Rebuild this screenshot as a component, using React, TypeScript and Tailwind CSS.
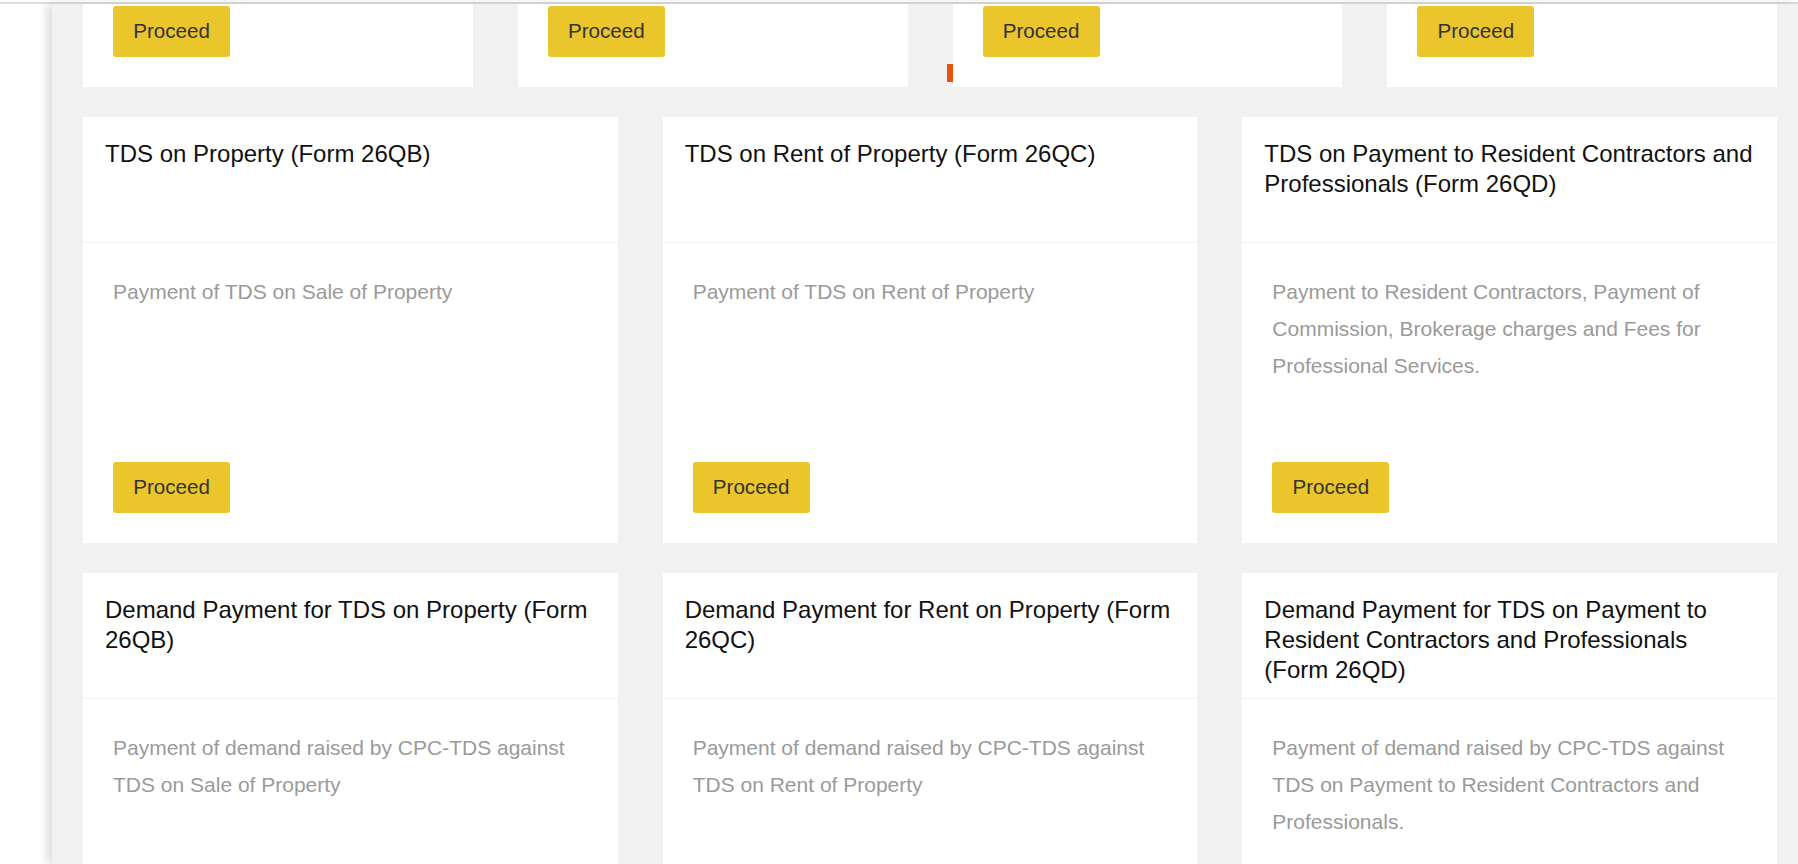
import React from "react";

interface PaymentCard {
  title: string;
  description: string;
}

const cards: PaymentCard[] = [
  {
    title: "TDS on Property (Form 26QB)",
    description: "Payment of TDS on Sale of Property",
  },
  {
    title: "TDS on Rent of Property (Form 26QC)",
    description: "Payment of TDS on Rent of Property",
  },
  {
    title: "TDS on Payment to Resident Contractors and Professionals (Form 26QD)",
    description:
      "Payment to Resident Contractors, Payment of Commission, Brokerage charges and Fees for Professional Services.",
  },
  {
    title: "Demand Payment for TDS on Property (Form 26QB)",
    description: "Payment of demand raised by CPC-TDS against TDS on Sale of Property",
  },
  {
    title: "Demand Payment for Rent on Property (Form 26QC)",
    description: "Payment of demand raised by CPC-TDS against TDS on Rent of Property",
  },
  {
    title:
      "Demand Payment for TDS on Payment to Resident Contractors and Professionals (Form 26QD)",
    description:
      "Payment of demand raised by CPC-TDS against TDS on Payment to Resident Contractors and Professionals.",
  },
];

const ProceedButton = () => (
  <button className="w-[117px] h-[51px] rounded-[3px] bg-[#ebc52c] text-[#333] text-[20.6px] leading-none">
    Proceed
  </button>
);

const Card = ({ title, description }: PaymentCard) => (
  <div className="h-[426px] bg-white flex flex-col">
    {/* Header */}
    <div className="h-[126px] shrink-0 border-b border-[#f0f0f0] px-[22px] pt-[22px]">
      <h3 className="text-[24px] leading-[30px] text-[#111]">{title}</h3>
    </div>
    {/* Body */}
    <div className="flex-1 flex flex-col px-[30px] pt-[30px] pb-[30px]">
      <p className="text-[21px] leading-[37px] text-[#9a9a9a]">{description}</p>
      <div className="mt-auto">
        <ProceedButton />
      </div>
    </div>
  </div>
);

export default function App() {
  return (
    <div className="h-[864px] w-full overflow-hidden bg-white font-['Liberation_Sans',Arial,sans-serif]">
      <div className="h-[2px] bg-white" />
      <div className="h-[2px] bg-[#dddddd]" />
      <div className="flex h-[860px]">
        {/* Sidebar */}
        <div className="w-[52px] shrink-0 bg-white" />

        {/* Main */}
        <main className="relative flex-1 bg-[#f1f1f1] pl-[31px] pr-[21px] shadow-[-5px_0_9px_rgba(0,0,0,0.14)]">
          {/* Top row (scrolled, only bottoms visible) */}
          <div className="grid grid-cols-4 gap-x-[45px]">
            {[0, 1, 2, 3].map((i) => (
              <div key={i} className="bg-white pl-[30px] pt-[2px] pb-[30px]">
                <ProceedButton />
              </div>
            ))}
          </div>

          {/* Small orange marker */}
          <div className="absolute left-[895px] top-[60px] w-[6px] h-[18px] bg-[#e8520c]" />

          <div className="mt-[30px] grid grid-cols-3 gap-x-[45px] gap-y-[30px]">
            {cards.map((card) => (
              <Card key={card.title} {...card} />
            ))}
          </div>
        </main>
      </div>
    </div>
  );
}
